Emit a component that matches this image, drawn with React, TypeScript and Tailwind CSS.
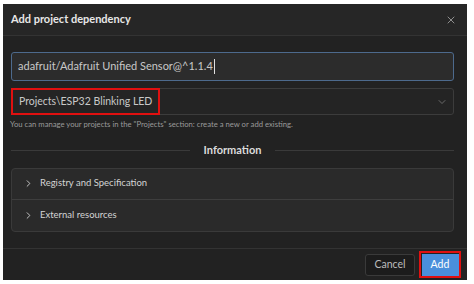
import { ChevronDown, ChevronRight, X } from 'lucide-react';

const font = { fontFamily: 'Lato, "Noto Sans", sans-serif' };

function Row({ label, last }: { label: string; last?: boolean }) {
  return (
    <div className={`h-[31px] flex items-center gap-[6px] pl-[11px] text-[9.5px] text-[#d4d4d4] ${last ? '' : 'border-b border-[#3e3e3e]'}`}>
      <ChevronRight size={11} strokeWidth={2} className="text-[#cfcfcf]" />
      <span>{label}</span>
    </div>
  );
}

export default function App() {
  return (
    <div className="w-[474px] h-[284px] bg-white pt-[4px] pl-[3px]" style={font}>
      <div className="w-[464px] h-[276px] bg-[#222222] flex flex-col">
        <div className="h-[32px] shrink-0 flex items-center justify-between pl-[8px] pr-[10px] bg-[#262626] border-b border-[#333333]">
          <span className="text-[11px] font-bold text-[#e8e8e8]">Add project dependency</span>
          <X size={12} strokeWidth={1.8} className="text-[#9a9a9a]" />
        </div>

        <div className="flex-1 pl-[8px] pr-[13px] pt-[16px] flex flex-col">
          <div className="h-[29px] flex items-center px-[6px] bg-[#2c2c2c] border border-[#4d6a8d] rounded-[3px] text-[11px] text-[#c8c8c8]">
            adafruit/Adafruit Unified Sensor@^1.1.4
            <span className="ml-[1px] w-px h-[15px] bg-[#e0e0e0]" />
          </div>

          <div className="mt-[7px] h-[27px] flex items-center justify-between bg-[#242424] border border-[#3c3c3c] rounded-[3px] pr-[5px]">
            <div className="h-[27px] -ml-px flex items-center pl-[6px] pr-[6px] border-[2.5px] border-[#e01010] text-[10.5px] text-[#c8c8c8]">
              Projects\ESP32 Blinking LED
            </div>
            <ChevronDown size={12} strokeWidth={1.6} className="text-[#7a7a7a]" />
          </div>

          <div className="mt-[3px] text-[7.7px] leading-[12px] text-[#9a9a9a] -ml-[1px]">
            You can manage your projects in the "Projects" section: create a new or add existing.
          </div>

          <div className="mt-[12px] flex items-center gap-[14px]">
            <div className="flex-1 h-px bg-[#3a3a3a]" />
            <span className="text-[11px] font-bold text-[#dcdcdc]">Information</span>
            <div className="flex-1 h-px bg-[#3a3a3a]" />
          </div>

          <div className="mt-[9px] bg-[#2a2a2a] border border-[#3a3a3a] rounded-[4px]">
            <Row label="Registry and Specification" />
            <Row label="External resources" last />
          </div>
        </div>

        <div className="h-[32px] shrink-0 border-t border-[#333333] flex items-center justify-end gap-[4px] pr-[6px]">
          <div className="h-[22px] w-[50px] flex items-center justify-center rounded-[3px] bg-[#1c1c1c] border border-[#3a3a3a] text-[10.5px] text-[#bdbdbd]">
            Cancel
          </div>
          <div className="h-[27px] w-[42px] flex items-center justify-center border-[2.5px] border-[#e01010]">
            <div className="h-[22px] w-[37px] flex items-center justify-center bg-[#4a8fdb] text-[10.5px] text-white">
              Add
            </div>
          </div>
        </div>
      </div>
    </div>
  );
}
